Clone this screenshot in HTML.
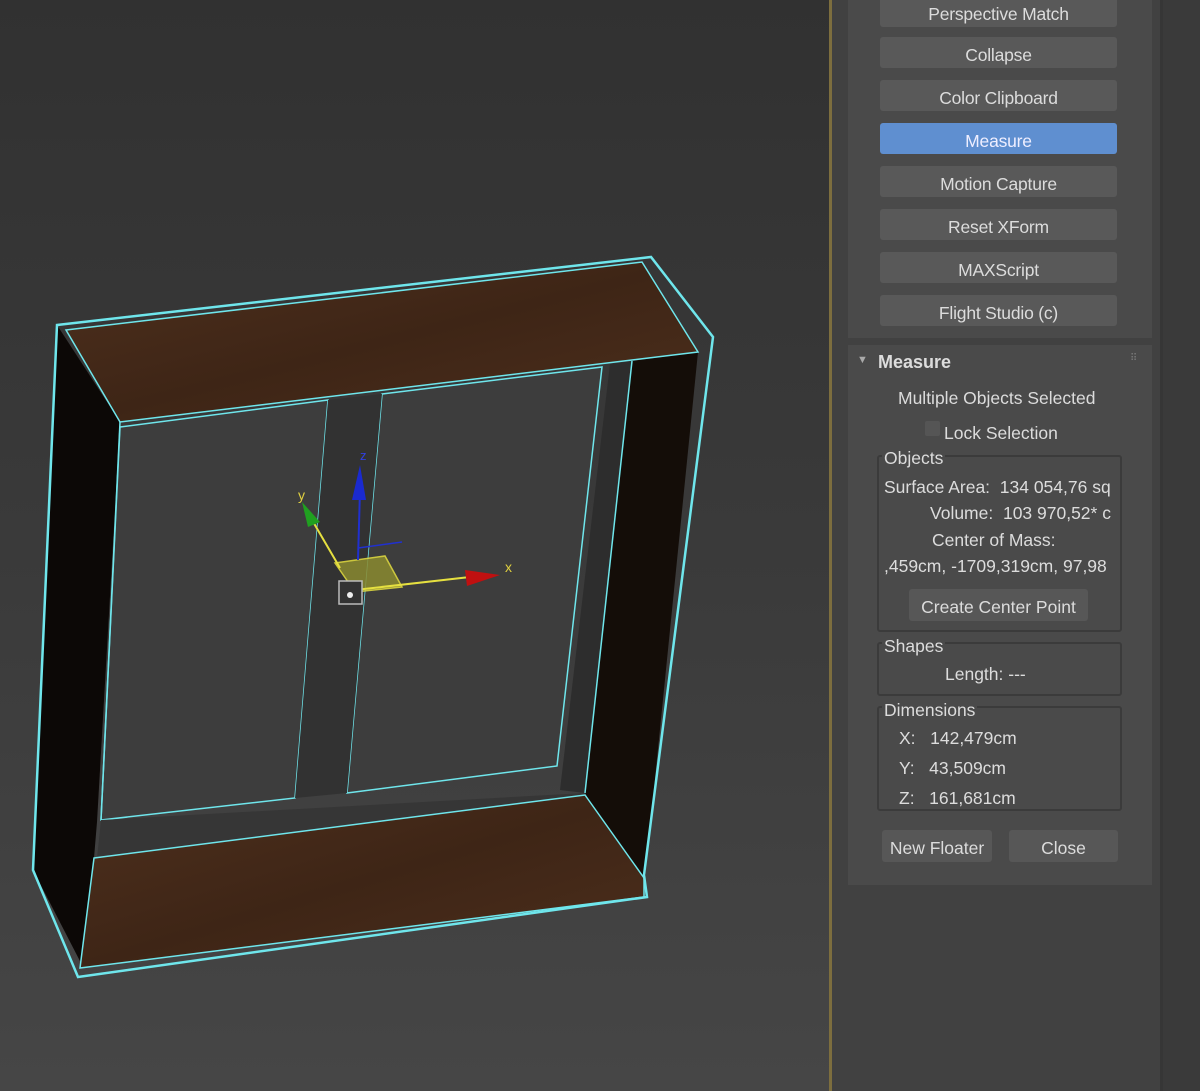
<!DOCTYPE html>
<html><head><meta charset="utf-8"><style>
*{margin:0;padding:0;box-sizing:border-box}
body{width:1200px;height:1091px;overflow:hidden;background:#3c3c3c;font-family:"Liberation Sans",sans-serif;color:#dcdcdc;font-size:17.5px;position:relative}
.vp{position:absolute;left:0;top:0;width:830px;height:1091px;background:linear-gradient(#313131,#3a3a3a 50%,#464646)}
.gold{position:absolute;left:829px;top:0;width:3px;height:1091px;background:#7d6e3e}
.panel{position:absolute;left:832px;top:0;width:328px;height:1091px;background:#414141}
.strip{position:absolute;left:1160px;top:0;width:40px;height:1091px;background:#3a3a3a;border-left:3px solid #363636}
.ro{position:absolute;left:848px;width:304px;background:#4a4a4a}
.btn{position:absolute;left:880px;width:237px;height:31px;background:#595959;border-radius:3px;text-align:center;line-height:37px;letter-spacing:-0.2px}
.btn.on{background:#5f8fd0;color:#eef}
.t{position:absolute;white-space:nowrap;margin-top:3px}
.grp{position:absolute;left:877px;width:245px;border:2px solid #3b3b3b;border-radius:3px}
.lbl{position:absolute;background:#4a4a4a;padding:0 2px;white-space:nowrap;margin-top:2px}
.sb{position:absolute;background:#575757;border-radius:3px;text-align:center;line-height:36px;height:32px}
</style></head><body>
<div class="vp">
<svg width="830" height="1091" style="position:absolute;left:0;top:0">
<defs>
<linearGradient id="w" x1="0" y1="0" x2="1" y2="1"><stop offset="0" stop-color="#4e301d"/><stop offset=".5" stop-color="#3e2516"/><stop offset="1" stop-color="#4d2f1c"/></linearGradient>
</defs>
<polygon points="57,325 120,422 97,822 94,858 82,965 33,870" fill="#0c0806"/>
<polygon points="632,361 698,352 645,878 628,870 585,793" fill="#140d08"/>
<polygon points="610,364 632,361 585,793 560,790" fill="#2d2d2d"/>
<polygon points="120,427 328,400 295,798 101,820" fill="#3d3d3d" stroke="#6fe6ec" stroke-width="1.5"/>
<polygon points="382,394 602,367 557,766 347,793" fill="#3d3d3d" stroke="#6fe6ec" stroke-width="1.5"/>
<polygon points="328,400 382,394 347,793 295,798" fill="#323232"/>
<polygon points="101,820 585,793 585,800 97,858" fill="#363636"/>
<polygon points="66,330 642,262 698,352 120,422" fill="url(#w)" stroke="#6fe6ec" stroke-width="1.5"/>
<polygon points="94,858 585,795 644,878 644,897 80,968" fill="url(#w)" stroke="#6fe6ec" stroke-width="1.5"/>
<polygon points="57,325 651,257 713,337 644,875 647,897 78,977 33,870" fill="none" stroke="#6fe6ec" stroke-width="2.5"/>
<line x1="120" y1="422" x2="101" y2="820" stroke="#6fe6ec" stroke-width="1.5"/>
<line x1="632" y1="361" x2="585" y2="793" stroke="#6fe6ec" stroke-width="1.5"/>
<polygon points="335,563 385,556 402,587 355,592" fill="#8a8a30" opacity=".85" stroke="#e6e040" stroke-width="1.5"/>
<line x1="355" y1="590" x2="470" y2="577" stroke="#e6e040" stroke-width="2"/>
<polygon points="465,570 500,575 467,586" fill="#c01010"/>
<text x="505" y="572" fill="#e0d040" font-size="14">x</text>
<line x1="340" y1="568" x2="312" y2="520" stroke="#e6e040" stroke-width="2"/>
<polygon points="302,502 320,522 308,527" fill="#20a020"/>
<text x="298" y="500" fill="#e0d040" font-size="14">y</text>
<line x1="358" y1="560" x2="360" y2="490" stroke="#2030d0" stroke-width="2"/>
<polygon points="360,465 366,500 352,500" fill="#1a2ad0"/>
<text x="360" y="460" fill="#3040e0" font-size="13">z</text>
<line x1="358" y1="548" x2="402" y2="542" stroke="#2030d0" stroke-width="1.5"/>
<rect x="339" y="581" width="23" height="23" fill="#333" stroke="#bbb" stroke-width="1.5"/>
<circle cx="350" cy="595" r="3" fill="#eee"/>
</svg>
</div>
<div class="gold"></div>
<div class="panel"></div>
<div class="strip"></div>
<div class="ro" style="top:0;height:338px"></div>
<div class="btn" style="top:-4px">Perspective Match</div>
<div class="btn" style="top:37px">Collapse</div>
<div class="btn" style="top:80px">Color Clipboard</div>
<div class="btn on" style="top:123px">Measure</div>
<div class="btn" style="top:166px">Motion Capture</div>
<div class="btn" style="top:209px">Reset XForm</div>
<div class="btn" style="top:252px">MAXScript</div>
<div class="btn" style="top:295px">Flight Studio (c)</div>
<div class="ro" style="top:345px;height:540px"></div>
<div class="t" style="left:857px;top:351px;font-size:11px;color:#aaa">▼</div>
<div class="t" style="left:878px;top:349px;font-weight:bold;font-size:18px">Measure</div>
<div class="t" style="left:1130px;top:350px;font-size:10px;color:#777">⠿</div>
<div class="t" style="left:898px;top:385px">Multiple Objects Selected</div>
<div style="position:absolute;left:925px;top:421px;width:15px;height:15px;background:#555;border-radius:2px"></div>
<div class="t" style="left:944px;top:420px">Lock Selection</div>
<div class="grp" style="top:455px;height:177px"></div>
<div class="lbl" style="left:882px;top:446px">Objects</div>
<div class="t" style="left:884px;top:474px;width:228px;overflow:hidden">Surface Area:&nbsp; 134 054,76 sq</div>
<div class="t" style="left:930px;top:500px;width:182px;overflow:hidden">Volume:&nbsp; 103 970,52* c</div>
<div class="t" style="left:932px;top:527px">Center of Mass:</div>
<div class="t" style="left:884px;top:553px;width:228px;overflow:hidden">,459cm, -1709,319cm, 97,98</div>
<div class="sb" style="left:909px;top:589px;width:179px">Create Center Point</div>
<div class="grp" style="top:642px;height:54px"></div>
<div class="lbl" style="left:882px;top:634px">Shapes</div>
<div class="t" style="left:945px;top:661px">Length: ---</div>
<div class="grp" style="top:706px;height:105px"></div>
<div class="lbl" style="left:882px;top:698px">Dimensions</div>
<div class="t" style="left:899px;top:725px">X:&nbsp;&nbsp; 142,479cm</div>
<div class="t" style="left:899px;top:755px">Y:&nbsp;&nbsp; 43,509cm</div>
<div class="t" style="left:899px;top:785px">Z:&nbsp;&nbsp; 161,681cm</div>
<div class="sb" style="left:882px;top:830px;width:110px">New Floater</div>
<div class="sb" style="left:1009px;top:830px;width:109px">Close</div>
</body></html>
